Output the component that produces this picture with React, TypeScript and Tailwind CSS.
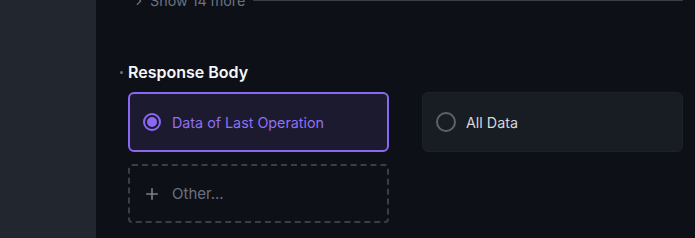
import { Plus, ChevronRight } from "lucide-react";

const App = () => {
  return (
    <div className="flex h-[238px] w-[695px] overflow-hidden bg-[#0d1017] font-['Inter',sans-serif]">
      {/* Sidebar */}
      <aside className="w-[96px] shrink-0 bg-[#22262f]" />

      <main className="flex-1 pl-[32px] pr-[12px]">
        {/* Show more row (cut off at top) */}
        <div className="-mt-[9px] flex items-center pl-[4px] text-sm text-[#6b7180]">
          <ChevronRight size={14} strokeWidth={2} className="shrink-0" />
          <span className="ml-[4px] mr-2 shrink-0 text-[14.3px]">Show 14 more</span>
          <div className="h-px flex-1 -translate-y-[1px] bg-[#3a3e47]" />
        </div>

        {/* Response Body */}
        <div className="mt-[51px] flex items-center">
          <span className="-ml-[8px] mr-[5px] size-[3px] rounded-full bg-[#6b7180]" />
          <h3 className="text-[16px] font-semibold leading-5 text-[#f5f6f8]">Response Body</h3>
        </div>

        <div className="mt-[10px] grid grid-cols-2 gap-x-[33px] gap-y-[12px]">
          <button className="flex h-[60px] items-center gap-[11px] rounded-[6px] border-2 border-[#8a68f4] bg-[#1c1a2e] px-[13px] text-left">
            <span className="flex size-[18px] items-center justify-center rounded-full border-2 border-[#8a68f4]">
              <span className="size-[10px] rounded-full bg-[#8a68f4]" />
            </span>
            <span className="text-[14.3px] text-[#8f70f6]">Data of Last Operation</span>
          </button>

          <button className="flex h-[60px] items-center gap-[10px] rounded-[6px] border border-[#1d2129] bg-[#181c23] px-[13px] text-left">
            <span className="size-[20px] rounded-full border-2 border-[#5d626c]" />
            <span className="text-[14.3px] text-[#d4d7dd]">All Data</span>
          </button>

          <button className="flex h-[59px] items-center gap-[11px] rounded-[4px] border-2 border-dashed border-[#3a3e46] px-[13px] text-left">
            <Plus size={18} strokeWidth={2.2} className="text-[#7a7f89]" />
            <span className="text-[15px] text-[#6b7180]">Other...</span>
          </button>
        </div>
      </main>
    </div>
  );
};

export default App;
